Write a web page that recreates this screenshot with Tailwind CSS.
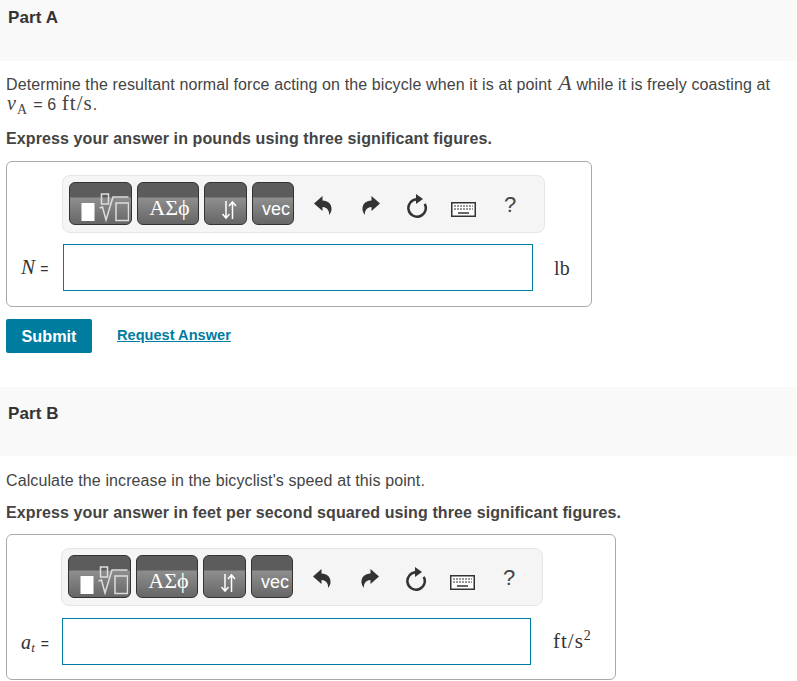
<!DOCTYPE html>
<html lang="en">
<head>
  <meta charset="UTF-8" />
  <meta name="viewport" content="width=device-width, initial-scale=1.0" />
  <title>Part A and Part B</title>
  <script src="https://cdn.jsdelivr.net/npm/@tailwindcss/browser@4"></script>
</head>
<body class="bg-white font-['Liberation_Sans',sans-serif] text-[16px] tracking-[0.11px] text-[#444] h-[681px] overflow-hidden">

  <!-- Part A -->
  <div class="h-[61px] bg-[#f9f9f9] pl-2 pt-[8px] text-[17px] font-bold text-[#333] leading-[20px]">Part A</div>
  <div class="pl-1.5 pt-[14px] leading-5">
    <p class="h-10 w-[785px] whitespace-nowrap">Determine the resultant normal force acting on the bicycle when it is at point <i class="font-['Liberation_Serif',serif] text-[22px] leading-[0] ml-[2px]">A</i> while it is freely coasting at<br><span class="font-['Liberation_Serif',serif] leading-[0] ml-px"><i class="text-[20px]">v</i><sub class="text-[14px] leading-[0] ml-px">A</sub></span><span class="ml-[6px]">= 6</span> <span class="font-['Liberation_Serif',serif] text-[21px] leading-[0] tracking-[1px] ml-px">ft/s</span>.</p>
    <p class="mt-[14px] font-bold">Express your answer in pounds using three significant figures.</p>
  </div>

  <div class="mt-[12px] ml-1.5 w-[586px] h-[146px] border border-[#aaa] rounded-md pt-[13px]">
    <div class="toolbar ml-[55px] w-[483px]"></div>
    <div class="flex items-center mt-[11px] h-[47px]">
      <div class="w-[56px] pl-[14px] font-['Liberation_Serif',serif] text-[#333] text-[21px] whitespace-nowrap"><i>N</i><span class="font-['Liberation_Sans',sans-serif] text-[14px] ml-[5px]">=</span></div>
      <div class="w-[470px] h-[47px] border border-[#007c9f]"></div>
      <span class="ml-[21px] font-['Liberation_Serif',serif] text-[20px] text-[#333]">lb</span>
    </div>
  </div>

  <div class="flex items-center mt-3 ml-1.5">
    <button class="w-[86px] h-[34px] bg-[#007c9f] rounded-[2px] text-white text-[16.2px] font-bold tracking-normal">Submit</button>
    <a class="ml-[25px] -mt-px text-[14.6px] font-bold text-[#007c9f] underline tracking-normal">Request Answer</a>
  </div>

  <!-- Part B -->
  <div class="mt-[34px] h-[69px] bg-[#f9f9f9] pl-2 pt-[17px] text-[17px] font-bold text-[#333] leading-[20px]">Part B</div>
  <div class="pl-1.5 pt-[15px] leading-5">
    <p>Calculate the increase in the bicyclist's speed at this point.</p>
    <p class="mt-3 font-bold">Express your answer in feet per second squared using three significant figures.</p>
  </div>

  <div class="mt-[11px] ml-1.5 w-[610px] h-[146px] border border-[#aaa] rounded-md pt-[13px]">
    <div class="toolbar ml-[54px] w-[482px]"></div>
    <div class="flex items-center mt-[12px] h-[47px]">
      <div class="w-[55px] pl-[14px] font-['Liberation_Serif',serif] text-[#333] text-[20px] whitespace-nowrap"><i>a<sub class="text-[13px]">t</sub></i><span class="font-['Liberation_Sans',sans-serif] text-[14px] ml-[6px]">=</span></div>
      <div class="w-[469px] h-[47px] border border-[#007c9f]"></div>
      <span class="ml-[22px] font-['Liberation_Serif',serif] text-[21px] text-[#333] tracking-[1px] whitespace-nowrap">ft/s<sup class="text-[14px] -top-[8px]">2</sup></span>
    </div>
  </div>

  <template id="toolbarTpl">
    <div class="h-[58px] bg-[#f5f5f5] border border-[#e5e5e5] rounded-lg flex items-start pl-[6px] pt-[6px]">
      <div class="w-[63px] h-[43px] rounded-md border border-[#333] bg-[linear-gradient(#5c5c5c_0,#5c5c5c_14px,#8e8e8e_15px,#666_100%)] flex items-end justify-center pb-[2px]">
        <svg width="56" height="32" viewBox="0 0 56 32" fill="none"><rect x="8.500" y="13" width="13" height="18" fill="#fff"/><rect x="28.500" y="4" width="7" height="10" stroke="#ddd" stroke-width="1.5"/><path d="M26.500 18l3-1 3.500 13 7-23h15.500" stroke="#ddd" stroke-width="1.5"/><rect x="43" y="13" width="12.500" height="17.500" stroke="#ddd" stroke-width="1.5"/></svg>
      </div>
      <div class="ml-[5px] w-[62px] h-[43px] rounded-md border border-[#333] bg-[linear-gradient(#5c5c5c_0,#5c5c5c_14px,#8e8e8e_15px,#666_100%)] flex justify-center pt-[12px] pl-[3px] font-['Liberation_Serif',serif] text-[22px] leading-[26px] text-white">ΑΣϕ</div>
      <div class="ml-[5px] w-[43px] h-[43px] rounded-md border border-[#333] bg-[linear-gradient(#5c5c5c_0,#5c5c5c_14px,#8e8e8e_15px,#666_100%)] flex justify-center pt-[17px] pl-[6px]">
        <svg width="16" height="20" viewBox="0 0 16 20" fill="none" stroke="#fff" stroke-width="1.5"><path d="M5 1v17M1.500 14l3.500 4 3.500-4M11.500 19V2M8 6l3.500-4 3.500 4"/></svg>
      </div>
      <div class="ml-[5px] w-[42px] h-[43px] rounded-md border border-[#333] bg-[linear-gradient(#5c5c5c_0,#5c5c5c_14px,#8e8e8e_15px,#666_100%)] flex justify-center pt-[16px] pl-[6px] text-white text-[18px] leading-5 tracking-normal overflow-hidden">vec</div>
      <svg class="ml-[20px] mt-[14px]" width="18" height="20" viewBox="0 0 18 20" fill="#333"><path d="M0 7.500L8.500 0v4.500c5.500 0 9.500 3.500 9 9.500-.5 2-1.500 4-2.500 5 .5-3.500-1-7.500-6.500-8v4z"/></svg>
      <svg class="ml-[30px] mt-[14px]" width="18" height="20" viewBox="0 0 18 20" fill="#333"><path d="M18 7.500L9.500 0v4.500c-5.500 0-9.500 3.500-9 9.500 .5 2 1.500 4 2.500 5-.5-3.500 1-7.500 6.500-8v4z"/></svg>
      <svg class="ml-[26px] mt-[12px]" width="22" height="24" viewBox="0 0 22 24" fill="none"><path d="M18.700 9.800A8.700 8.700 0 1 1 11 5.300" stroke="#333" stroke-width="2.500"/><path d="M10 0l7 5-7 5z" fill="#333"/></svg>
      <svg class="ml-[23px] mt-[20px]" width="25" height="15" viewBox="0 0 25 15"><rect x=".75" y=".75" width="23.500" height="13.500" fill="#fff" stroke="#333" stroke-width="1.500"/><path d="M3 4h19M3 7h19" stroke="#777" stroke-width="1.500" stroke-dasharray="2 1"/><path d="M7 11h11" stroke="#333" stroke-width="1.500"/></svg>
      <span class="ml-[28px] mt-[8px] text-[#444] text-[22px] leading-[30px]">?</span>
    </div>
  </template>

  <script>
    // same toolbar in both answer panels
    const tpl = document.getElementById('toolbarTpl');
    document.querySelectorAll('.toolbar').forEach((el) => {
      el.appendChild(tpl.content.cloneNode(true));
    });
  </script>
</body>
</html>
